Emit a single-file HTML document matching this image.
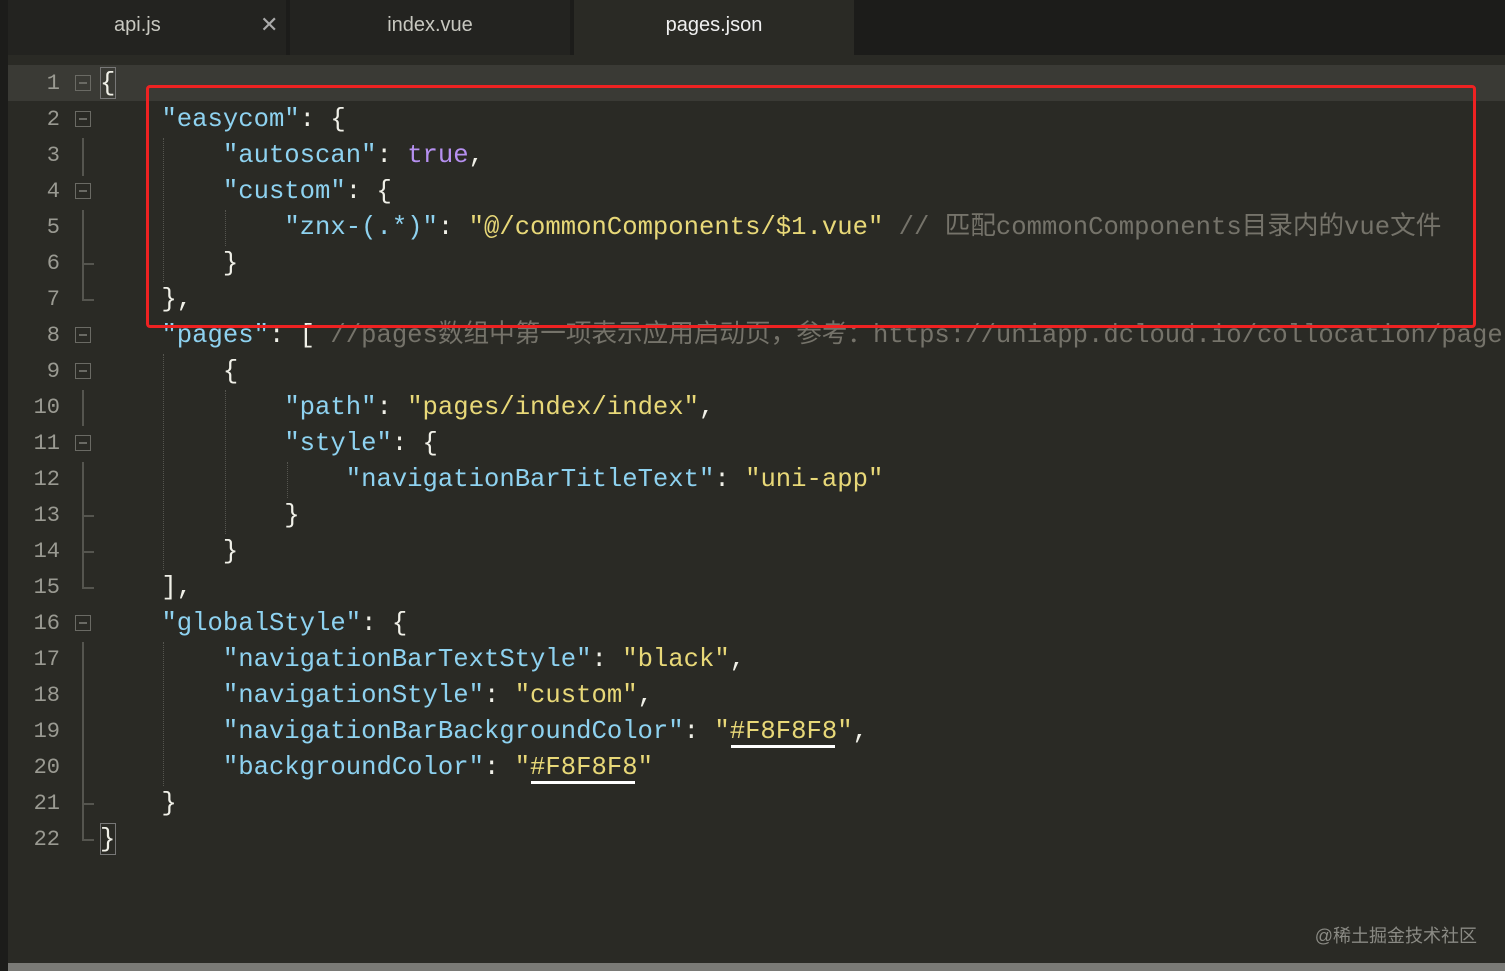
<!DOCTYPE html>
<html><head><meta charset="utf-8"><style>
body{margin:0;width:1505px;height:971px;background:#2a2a25;overflow:hidden;position:relative;font-family:"Liberation Mono","Noto Sans CJK SC",monospace}
.tabs{position:absolute;left:0;top:0;width:1505px;height:55px;background:#1c1c1a}
.tab{position:absolute;top:0;height:55px;background:#232320;color:#c8c8c0;font:20px "Liberation Sans",sans-serif;line-height:50px;text-align:center}
.strip{position:absolute;left:0;top:0;width:8px;height:971px;background:#1c1c1a}
.hl{position:absolute;left:8px;top:65px;width:1497px;height:36px;background:#3a3a35}
.ln{position:absolute;left:18px;width:42px;text-align:right;color:#9a9a92;font-size:22px;line-height:36px}
.fb{position:absolute;left:75px;width:14px;height:14px;border:1.5px solid #6a6a64}
.fb:after{content:"";position:absolute;left:3px;top:6px;width:8px;height:1.5px;background:#6a6a64}
.vl{position:absolute;left:82px;width:1.5px;background:#55554f}
.tk{position:absolute;left:82px;width:12px;height:1.5px;background:#55554f}
.code{position:absolute;left:100px;font-size:25.6px;line-height:36px;white-space:pre;color:#f0f0e8}
.k{color:#8ed2f0}.s{color:#e8d878}.t{color:#b690f0}.c{color:#75736a}
.guide{position:absolute;width:0;border-left:1.5px dotted #55554f}
</style></head><body>
<div class="tabs">
<div class="tab" style="left:8px;width:278px;text-align:left;"><span style="position:absolute;left:106px">api.js</span><span style="position:absolute;left:252px;font-size:22px;color:#aaa">✕</span></div>
<div class="tab" style="left:290px;width:280px">index.vue</div>
<div class="tab" style="left:574px;width:280px;background:#2a2a25;color:#f0f0f0">pages.json</div>
</div>
<div class="strip"></div>
<div class="hl"></div>
<div style="position:absolute;left:100px;top:67px;width:14px;height:30px;border:1px solid #777"></div>
<div style="position:absolute;left:100px;top:823px;width:14px;height:30px;border:1px solid #777"></div>
<div id="ln"></div>
<div class="guide" style="left:163px;top:138px;height:144px"></div>
<div class="guide" style="left:225px;top:210px;height:36px"></div>
<div class="guide" style="left:163px;top:354px;height:216px"></div>
<div class="guide" style="left:225px;top:390px;height:144px"></div>
<div class="guide" style="left:287px;top:462px;height:36px"></div>
<div class="guide" style="left:163px;top:642px;height:144px"></div>
<div class="vl" style="top:138px;height:38px"></div>
<div class="vl" style="top:210px;height:90px"></div>
<div class="vl" style="top:390px;height:36px"></div>
<div class="vl" style="top:462px;height:126px"></div>
<div class="vl" style="top:642px;height:198px"></div>
<div id="tk"></div>
<div class="code" style="top:66px">{
    <span class="k">"easycom"</span>: {
        <span class="k">"autoscan"</span>: <span class="t">true</span>,
        <span class="k">"custom"</span>: {
            <span class="k">"znx-(.*)"</span>: <span class="s">"@/commonComponents/$1.vue"</span> <span class="c">// 匹配commonComponents目录内的vue文件</span>
        }
    },
    <span class="k">"pages"</span>: [ <span class="c">//pages数组中第一项表示应用启动页，参考：https://uniapp.dcloud.io/collocation/pages</span>
        {
            <span class="k">"path"</span>: <span class="s">"pages/index/index"</span>,
            <span class="k">"style"</span>: {
                <span class="k">"navigationBarTitleText"</span>: <span class="s">"uni-app"</span>
            }
        }
    ],
    <span class="k">"globalStyle"</span>: {
        <span class="k">"navigationBarTextStyle"</span>: <span class="s">"black"</span>,
        <span class="k">"navigationStyle"</span>: <span class="s">"custom"</span>,
        <span class="k">"navigationBarBackgroundColor"</span>: <span class="s">"#F8F8F8"</span>,
        <span class="k">"backgroundColor"</span>: <span class="s">"#F8F8F8"</span>
    }
}</div>
<div style="position:absolute;left:731px;top:745px;width:104px;height:3px;background:#fff"></div>
<div style="position:absolute;left:531px;top:781px;width:104px;height:3px;background:#fff"></div>
<div style="position:absolute;left:146px;top:85px;width:1324px;height:237px;border:3.5px solid #ee2222;border-radius:4px"></div>
<div style="position:absolute;right:28px;top:922px;color:#8a8a84;font:18px 'Liberation Sans','Noto Sans CJK SC',sans-serif">@稀土掘金技术社区</div>
<div style="position:absolute;left:8px;top:963px;width:1497px;height:8px;background:#7a7a76"></div>
<script>
var f=[1,2,4,8,9,11,16],h='';
for(var i=1;i<=22;i++){var y=66+(i-1)*36;h+='<div class="ln" style="top:'+y+'px">'+i+'</div>';if(f.indexOf(i)>=0)h+='<div class="fb" style="top:'+(y+9)+'px"></div>';}
document.getElementById('ln').innerHTML=h;
var t=[6,7,13,14,15,21,22],g='';
for(var j=0;j<t.length;j++){g+='<div class="tk" style="top:'+(83+(t[j]-1)*36)+'px"></div>';}
document.getElementById('tk').innerHTML=g;
</script>
</body></html>
